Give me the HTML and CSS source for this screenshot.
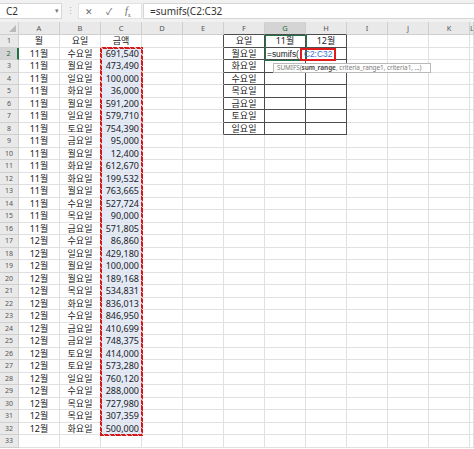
FILE: index.html
```html
<!DOCTYPE html>
<html lang="ko">
<head>
    <meta charset="UTF-8">
    <meta name="viewport" content="width=device-width, initial-scale=1.0">
    <title>SUMIFS</title>
    <link rel="stylesheet" href="styles.css">
</head>
<body>
<div class="formula-bar">
    <div class="name-box">C2<span class="drop">▾</span></div>
    <div class="grip">⋮</div>
    <div class="fx-buttons"><span>✕</span><span>✓</span><span class="fx"><i>f</i><sub>x</sub></span></div>
    <div class="formula">=sumifs(C2:C32</div>
</div>
<div class="sheet" id="sheet"></div>

<div class="copy-range"></div>
<div class="active-cell"></div>
<div class="editing">=sumifs(<span class="ref">C2:C32</span></div>
<div class="hint">SUMIFS(<b>sum_range</b>, criteria_range1, criteria1, ...)</div>

<script>
    const rows = [
        ["월", "요일", "금액"],
        ["11월", "수요일", "691,540"],
        ["11월", "월요일", "473,490"],
        ["11월", "일요일", "100,000"],
        ["11월", "화요일", "36,000"],
        ["11월", "월요일", "591,200"],
        ["11월", "일요일", "579,710"],
        ["11월", "토요일", "754,390"],
        ["11월", "금요일", "95,000"],
        ["11월", "월요일", "12,400"],
        ["11월", "화요일", "612,670"],
        ["11월", "화요일", "199,532"],
        ["11월", "월요일", "763,665"],
        ["11월", "수요일", "527,724"],
        ["11월", "목요일", "90,000"],
        ["11월", "금요일", "571,805"],
        ["12월", "수요일", "86,860"],
        ["12월", "일요일", "429,180"],
        ["12월", "월요일", "100,000"],
        ["12월", "월요일", "189,168"],
        ["12월", "목요일", "534,831"],
        ["12월", "화요일", "836,013"],
        ["12월", "수요일", "846,950"],
        ["12월", "금요일", "410,699"],
        ["12월", "금요일", "748,375"],
        ["12월", "토요일", "414,000"],
        ["12월", "토요일", "573,280"],
        ["12월", "일요일", "760,120"],
        ["12월", "수요일", "288,000"],
        ["12월", "목요일", "727,980"],
        ["12월", "목요일", "307,359"],
        ["12월", "화요일", "500,000"]
    ];
    const days = ["요일", "월요일", "화요일", "수요일", "목요일", "금요일", "토요일", "일요일"];
    const sheet = document.getElementById("sheet");

    function add(text, cls) {
        const d = document.createElement("div");
        d.className = "cell " + (cls || "");
        d.textContent = text;
        sheet.appendChild(d);
    }

    add("", "head corner");
    "ABCDEFGHIJKL".split("").forEach(c => {
        let cls = "head";
        if ("FGH".includes(c)) cls += " tbl-top";
        if (c === "G") cls += " on";
        add(c, cls);
    });

    for (let r = 1; r <= 33; r++) {
        add(r, "head row-head" + (r === 2 ? " on-row" : ""));
        const d = rows[r - 1] || ["", "", ""];
        const inTable = r <= 8;
        add(d[0]);
        add(d[1]);
        add(d[2], r === 1 ? "" : "num" + (r <= 32 ? " picked" : ""));
        add("");
        add("", inTable ? "tbl-edge" : "");
        add(inTable ? days[r - 1] : "", inTable ? "tbl" : "");
        add(r === 1 ? "11월" : "", inTable ? "tbl" : "");
        add(r === 1 ? "12월" : "", inTable ? "tbl" : "");
        add("");
        add("");
        add("");
        add("");
    }
</script>
</body>
</html>
```

FILE: styles.css
```css
body {
    margin: 0;
    position: relative;
    width: 474px;
    height: 449px;
    overflow: hidden;
    background: #fff;
    font-family: "Noto Sans", "Noto Sans CJK KR", sans-serif;
    color: #222;
}

/* formula bar */
.formula-bar {
    height: 22px;
    box-sizing: border-box;
    padding-top: 3px;
    display: flex;
    align-items: flex-start;
    background: #f1f1f1;
}
.name-box {
    width: 62px;
    height: 16px;
    box-sizing: border-box;
    display: flex;
    justify-content: space-between;
    padding: 0 2px 0 6px;
    background: #fff;
    border: 1px solid #d6d6d6;
    border-left: none;
    font-size: 10px;
    line-height: 14px;
    color: #333;
}
.name-box .drop {
    font-size: 7px;
    color: #777;
}
.grip {
    width: 16px;
    text-align: center;
    font-size: 9px;
    line-height: 16px;
    color: #b0b0b0;
}
.fx-buttons {
    width: 64px;
    height: 16px;
    box-sizing: border-box;
    display: flex;
    justify-content: space-around;
    align-items: center;
    padding-right: 4px;
    background: #fff;
    border: 1px solid #e2e2e2;
    font-size: 9px;
    color: #666;
}
.fx-buttons .fx {
    font-family: "Liberation Serif", serif;
    font-size: 10px;
}
.fx-buttons sub {
    font-size: 6px;
}
.formula {
    flex: 1;
    height: 16px;
    margin-left: 1px;
    box-sizing: border-box;
    padding-left: 6px;
    background: #fff;
    border: 1px solid #d6d6d6;
    border-right: none;
    font-size: 10px;
    line-height: 14px;
    color: #333;
}

/* grid */
.sheet {
    display: grid;
    grid-template-columns: 19px repeat(11, 41px) 1fr;
    grid-template-rows: 13px;
    grid-auto-rows: 12.5px;
}
.cell {
    box-sizing: border-box;
    border-right: 1px solid #e1e1e1;
    border-bottom: 1px solid #e1e1e1;
    font-size: 9px;
    line-height: 12px;
    text-align: center;
    white-space: nowrap;
    overflow: hidden;
}
.head {
    position: relative;
    background: #e9e9e9;
    border-color: #cfcfcf;
    color: #555;
    font-size: 7.5px;
}
.row-head {
    font-size: 7px;
}
.corner::after {
    content: "";
    position: absolute;
    right: 2px;
    bottom: 2px;
    border-left: 7px solid transparent;
    border-bottom: 7px solid #b9b9b9;
}
.head.on {
    background: #d4d4d4;
    color: #1e6b41;
}
.on-row {
    background: #d4d4d4;
    border-right: 2px solid #217346;
    color: #1e6b41;
}
.num {
    text-align: right;
    padding-right: 2px;
}
.picked {
    background: #e2eaf7;
}
.tbl,
.head.tbl-top {
    border-bottom-color: #4d4d4d;
}
.tbl,
.tbl-edge {
    border-right-color: #4d4d4d;
}

/* overlays */
.copy-range {
    position: absolute;
    left: 100px;
    top: 47px;
    width: 43px;
    height: 389px;
    box-sizing: border-box;
    border: 2px solid #d01818;
    border-image: repeating-linear-gradient(45deg, #d21a1a 0 3px, #f2b0b0 3px 4px) 2;
}
.active-cell {
    position: absolute;
    left: 265px;
    top: 35px;
    width: 42px;
    height: 26px;
    box-sizing: border-box;
    border: 1px solid #217346;
}
.editing {
    position: absolute;
    left: 267px;
    top: 48px;
    font-family: "Liberation Sans", "Noto Sans", sans-serif;
    font-size: 8.4px;
    line-height: 12px;
    white-space: nowrap;
    color: #222;
}
.editing .ref {
    display: inline-block;
    margin-left: 1px;
    padding: 0 2px;
    color: #3b73d1;
    border: 2px solid #e01b1b;
    line-height: 9px;
}
.hint {
    position: absolute;
    left: 273px;
    top: 63px;
    width: 158px;
    height: 10px;
    box-sizing: border-box;
    padding-left: 3px;
    background: #fff;
    border: 1px solid #b9b9b9;
    font-size: 6.4px;
    letter-spacing: -0.05px;
    line-height: 8px;
    white-space: nowrap;
    overflow: hidden;
    color: #7a7a7a;
}
.hint b {
    color: #555;
}
```
